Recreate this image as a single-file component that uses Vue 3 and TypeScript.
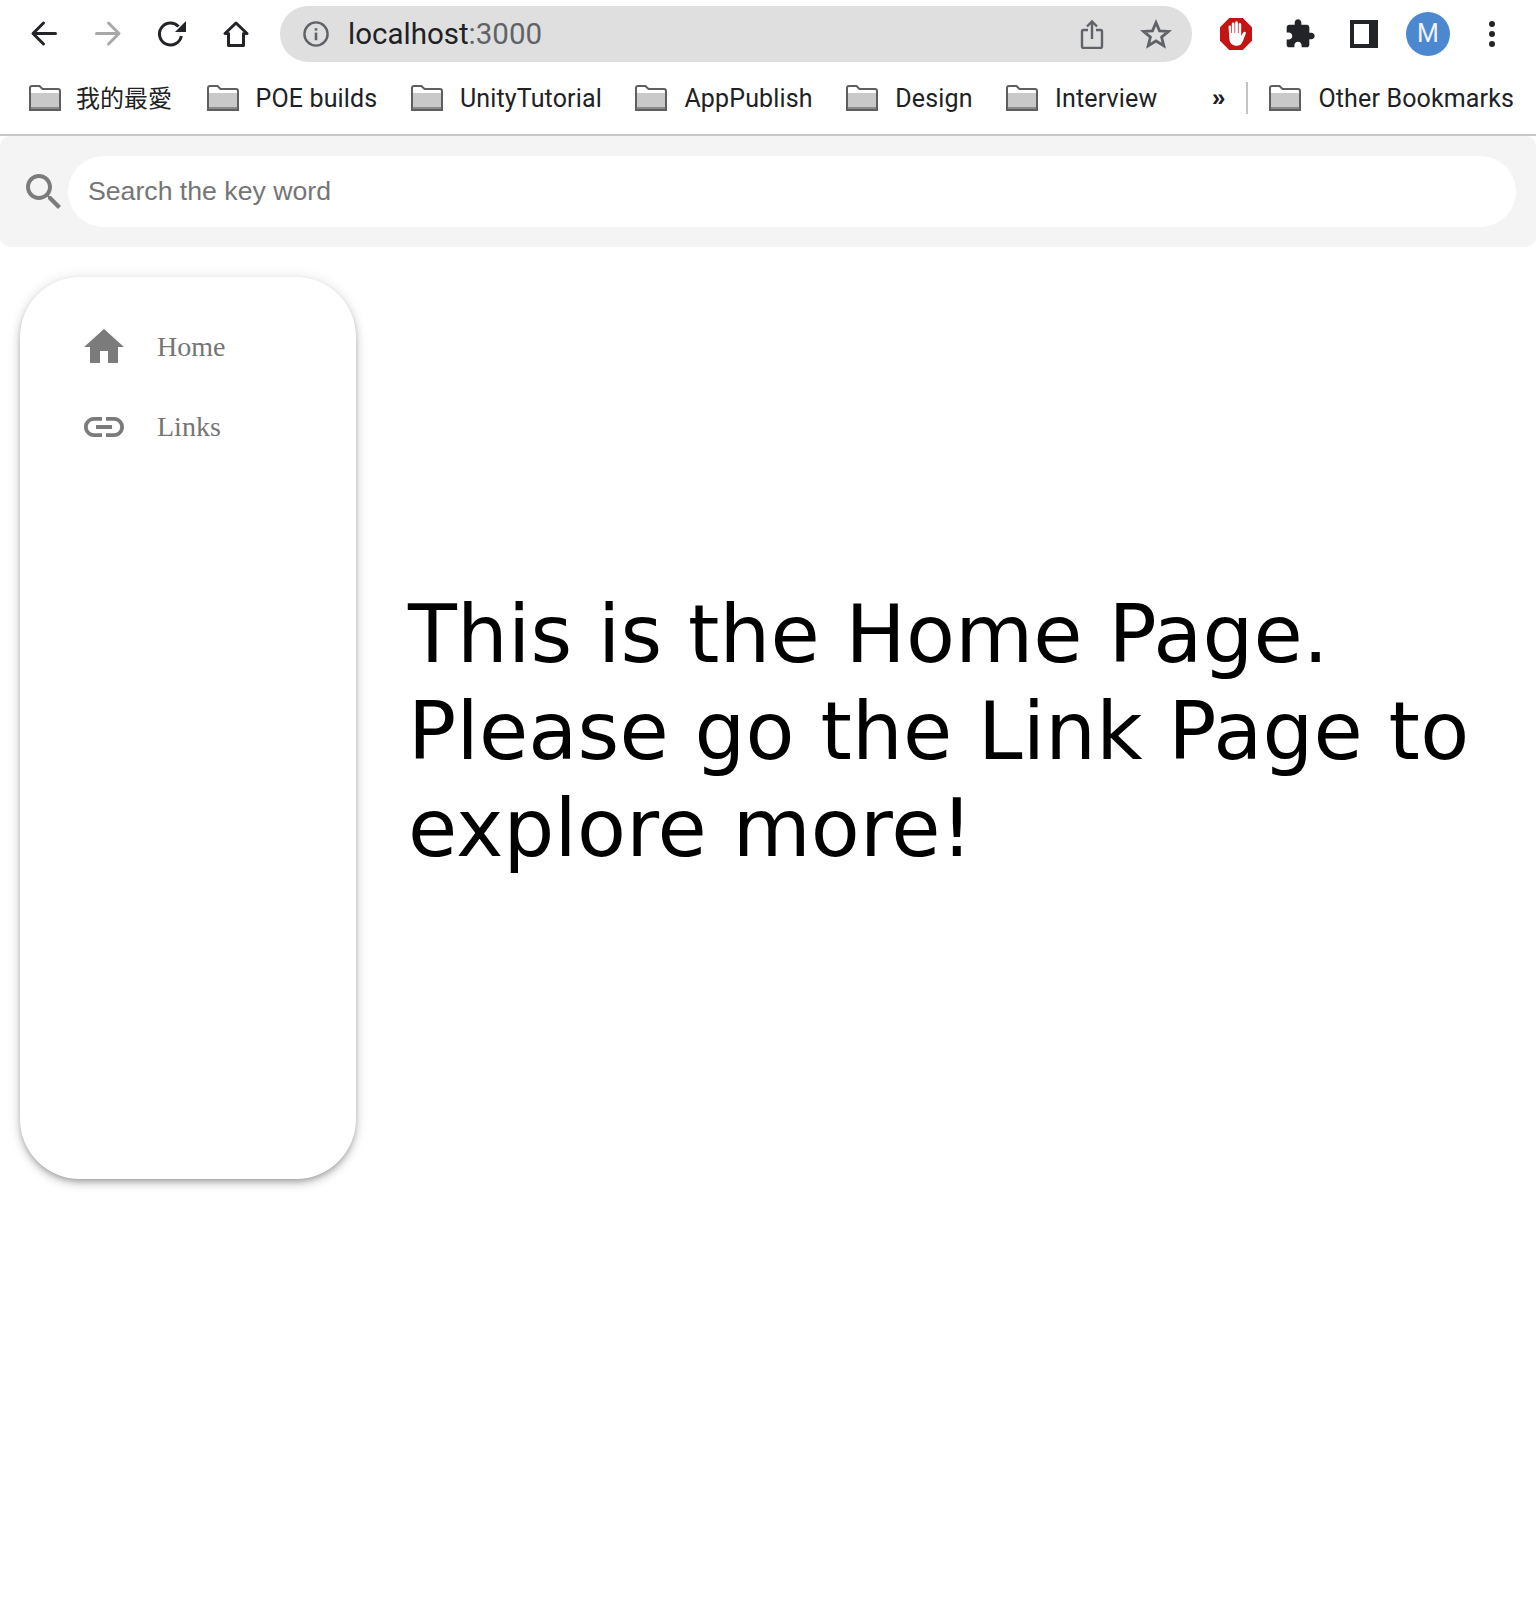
<script setup lang="ts">
const bookmarks: string[] = ['我的最愛', 'POE builds', 'UnityTutorial', 'AppPublish', 'Design', 'Interview']
const nav = [
  { label: 'Home', d: 'M10 20v-6h4v6h5v-8h3L12 3 2 12h3v8z' },
  {
    label: 'Links',
    d: 'M3.9 12c0-1.71 1.39-3.1 3.1-3.1h4V7H7c-2.76 0-5 2.24-5 5s2.24 5 5 5h4v-1.9H7c-1.71 0-3.1-1.39-3.1-3.1zM8 13h8v-2H8v2zm9-6h-4v1.9h4c1.71 0 3.1 1.39 3.1 3.1s-1.39 3.1-3.1 3.1h-4V17h4c2.76 0 5-2.24 5-5s-2.24-5-5-5z',
  },
]
</script>

<template>
  <div class="page">
    <header class="chrome">
      <div class="toolbar">
        <div class="tool">
          <svg width="36" height="36" viewBox="0 0 36 36"><path fill="none" stroke="#232428" stroke-width="3" stroke-linecap="round" stroke-linejoin="round" d="M29.500 17.500H7.500M17.500 7 7 17.500 17.500 28" /></svg>
        </div>
        <div class="tool">
          <svg width="36" height="36" viewBox="0 0 36 36"><path fill="none" stroke="#a8a8a8" stroke-width="3" stroke-linecap="round" stroke-linejoin="round" d="M6.500 17.500H28.500M18.500 7 29 17.500 18.500 28" /></svg>
        </div>
        <div class="tool">
          <svg width="36" height="36" viewBox="0 0 36 36">
            <path fill="none" stroke="#232428" stroke-width="3" d="M24.500 10.500A11 11 0 1 0 27.300 20" />
            <path fill="#232428" d="M32 5V16H21z" />
          </svg>
        </div>
        <div class="tool">
          <svg width="36" height="36" viewBox="0 0 36 36"><path fill="none" stroke="#232428" stroke-width="3" stroke-linejoin="round" d="M18 7 7 17.500H10.500V29.500H25.500V17.500H29z" /></svg>
        </div>
        <div class="omnibox">
          <svg class="info" width="28" height="28" viewBox="0 0 28 28">
            <circle cx="14" cy="14" r="11.6" fill="none" stroke="#5f6368" stroke-width="2.4" />
            <rect x="12.7" y="12.6" width="2.6" height="7.6" fill="#5f6368" />
            <rect x="12.7" y="8.200" width="2.6" height="2.4" fill="#5f6368" />
          </svg>
          <span class="url"><span class="host">localhost</span>:3000</span>
          <span class="spacer"></span>
          <svg class="share" width="24" height="30" viewBox="0 0 24 30">
            <path fill="none" stroke="#5f6368" stroke-width="2.4" stroke-linejoin="round" d="M8 11H3.500A1.500 1.500 0 0 0 2 12.500V27.500A1.500 1.500 0 0 0 3.500 29h17a1.500 1.500 0 0 0 1.500-1.500V12.500A1.500 1.500 0 0 0 20.500 11H16" />
            <path fill="none" stroke="#5f6368" stroke-width="2.4" d="M12 20V3M7 7.500 12 2.500 17 7.500" />
          </svg>
          <svg class="star" width="32" height="32" viewBox="0 0 32 32">
            <path fill="none" stroke="#5f6368" stroke-width="2.8" stroke-linejoin="miter" d="M16 4.500 19.500 12.800 28.500 13.400 21.600 19.100 23.800 27.700 16 23 8.200 27.700 10.400 19.100 3.500 13.400 12.500 12.800z" />
          </svg>
        </div>
        <div class="tool">
          <svg width="34" height="34" viewBox="0 0 34 34">
            <path fill="#c41515" d="M10.200 1h13.600L33 10.200v13.600L23.800 33H10.200L1 23.800V10.200z" />
            <path fill="#fff" d="M9.500 9.800a1.300 1.300 0 0 1 2.600 0V16h.7V6.800a1.350 1.350 0 0 1 2.700 0V16h.7V5.600a1.350 1.350 0 0 1 2.700 0V16h.7V7.300a1.300 1.300 0 0 1 2.600 0V19.200l1.700-3.100c.6-1.100 1.500-1.700 2.400-1.200.7.4.7 1.200.3 2.100l-2.900 7.400c-1 2.600-3.100 4.300-6 4.300-4 0-7.300-2.600-7.300-7z" />
          </svg>
        </div>
        <div class="tool">
          <svg width="32" height="32" viewBox="0 0 24 24"><path fill="#232428" d="M20.500 11H19V7c0-1.100-.9-2-2-2h-4V3.500C13 2.120 11.880 1 10.500 1S8 2.120 8 3.500V5H4c-1.100 0-1.990.9-1.990 2v3.800H3.500c1.490 0 2.700 1.210 2.700 2.700s-1.210 2.700-2.700 2.700H2V20c0 1.100.9 2 2 2h3.800v-1.500c0-1.490 1.210-2.700 2.700-2.700 1.490 0 2.700 1.210 2.700 2.700V22H17c1.100 0 2-.9 2-2v-4h1.500c1.380 0 2.500-1.120 2.500-2.500S21.880 11 20.500 11z" /></svg>
        </div>
        <div class="tool">
          <div class="panel"><div class="panel-inner"></div></div>
        </div>
        <div class="tool">
          <div class="avatar">M</div>
        </div>
        <div class="tool">
          <svg width="8" height="28" viewBox="0 0 8 28">
            <circle cx="4" cy="4" r="3" fill="#232428" />
            <circle cx="4" cy="14" r="3" fill="#232428" />
            <circle cx="4" cy="24" r="3" fill="#232428" />
          </svg>
        </div>
      </div>
      <div class="bookmarks">
        <div v-for="b in bookmarks" :key="b" class="bookmark">
          <svg class="folder" width="32" height="26" viewBox="0 0 32 26">
            <path fill="#fff" stroke="#5f5f5f" stroke-width="2" d="M1 24V3a2 2 0 0 1 2-2h7.500l3 3H29a2 2 0 0 1 2 2v19H1z" />
            <rect x="2" y="8" width="28" height="14" fill="#c9c9c9" />
            <rect x="2" y="22" width="28" height="2" fill="#8a8a8a" />
          </svg>
          <span :class="{ cjk: b === '我的最愛' }">{{ b }}</span>
        </div>
        <span class="more">»</span>
        <span class="divider"></span>
        <div class="bookmark">
          <svg class="folder" width="32" height="26" viewBox="0 0 32 26">
            <path fill="#fff" stroke="#5f5f5f" stroke-width="2" d="M1 24V3a2 2 0 0 1 2-2h7.500l3 3H29a2 2 0 0 1 2 2v19H1z" />
            <rect x="2" y="8" width="28" height="14" fill="#c9c9c9" />
            <rect x="2" y="22" width="28" height="2" fill="#8a8a8a" />
          </svg>
          <span>Other Bookmarks</span>
        </div>
      </div>
    </header>

    <div class="searchbar">
      <svg class="search-icon" width="48" height="48" viewBox="0 0 24 24"><path fill="#7b7b7b" d="M15.500 14h-.79l-.28-.27C15.410 12.590 16 11.110 16 9.500 16 5.910 13.090 3 9.500 3S3 5.910 3 9.500 5.910 16 9.500 16c1.610 0 3.090-.59 4.230-1.570l.27.28v.79l5 4.990L20.490 19l-4.990-5zm-6 0C7.010 14 5 11.990 5 9.500S7.010 5 9.500 5 14 7.010 14 9.500 11.990 14 9.500 14z" /></svg>
      <input class="search-input" type="text" placeholder="Search the key word" />
    </div>

    <main class="content">
      <nav class="sidebar">
        <div v-for="n in nav" :key="n.label" class="nav-item">
          <svg width="48" height="48" viewBox="0 0 24 24"><path fill="#7b7b7b" :d="n.d" /></svg>
          <span>{{ n.label }}</span>
        </div>
      </nav>
      <p class="message">This is the Home Page. Please go the Link Page to explore more!</p>
    </main>
  </div>
</template>

<style>
html, body { margin: 0; background: #fff; }
</style>

<style scoped>
.page {
  width: 1536px;
  height: 1614px;
  background: #fff;
  overflow: hidden;
}
.chrome {
  height: 134px;
  border-bottom: 2px solid #c8c8c8;
}
.toolbar {
  display: flex;
  align-items: center;
  height: 56px;
  padding: 6px 12px 0;
}
.tool {
  flex: none;
  width: 64px;
  height: 56px;
  display: flex;
  align-items: center;
  justify-content: center;
}
.omnibox {
  flex: 1;
  height: 56px;
  margin: 0 12px;
  border-radius: 28px;
  background: #dfdfdf;
  display: flex;
  align-items: center;
  padding: 0 20px 0 22px;
}
.info { flex: none; }
.url {
  margin-left: 18px;
  font: 29.5px/56px Roboto, sans-serif;
  color: #5f6368;
}
.host { color: #202124; }
.spacer { flex: 1; }
.share { flex: none; margin-right: 36px; }
.star { flex: none; }
.panel {
  width: 28px;
  height: 28px;
  background: #232428;
  padding: 4px 9px 4px 4px;
  box-sizing: border-box;
}
.panel-inner {
  width: 100%;
  height: 100%;
  background: #fff;
}
.avatar {
  width: 44px;
  height: 44px;
  border-radius: 50%;
  background: #4c88d0;
  color: #eef4fb;
  font: 25px/44px Roboto, sans-serif;
  text-align: center;
}
.bookmarks {
  display: flex;
  align-items: center;
  height: 72px;
  padding-left: 29px;
  gap: 33.5px;
  font: 25px Roboto, sans-serif;
  letter-spacing: 0.15px;
  color: #202124;
}
.bookmark {
  display: flex;
  align-items: center;
  gap: 17px;
  white-space: nowrap;
}
.cjk {
  font: 24px "Noto Sans CJK TC", sans-serif;
  letter-spacing: 0;
  margin: 0 1px 3px -2px;
}
.folder { flex: none; }
.more {
  margin-left: 21px;
  font: 700 24px "Liberation Sans", sans-serif;
}
.divider {
  width: 2px;
  height: 32px;
  background: #c4c4c4;
  margin-left: -13px;
  margin-right: -12px;
}
.searchbar {
  display: flex;
  align-items: center;
  height: 111px;
  padding: 0 20px;
  box-sizing: border-box;
  border-radius: 10px;
  background: #f4f4f4;
}
.search-icon { flex: none; }
.search-input {
  flex: 1;
  min-width: 0;
  height: 71px;
  padding: 0 20px;
  box-sizing: border-box;
  border: none;
  outline: none;
  border-radius: 36px;
  background: #fff;
  font: 26.67px "Liberation Sans", sans-serif;
}
.search-input::placeholder {
  color: #757575;
  opacity: 1;
}
.content {
  display: flex;
  align-items: center;
  padding: 30px 20px 0;
}
.sidebar {
  flex: none;
  box-sizing: border-box;
  width: 336px;
  height: 902px;
  padding: 30px 0 0 60px;
  border-radius: 60px;
  background: #fff;
  box-shadow: 0 3px 5px -1px rgba(0, 0, 0, 0.2), 0 5px 8px 0 rgba(0, 0, 0, 0.14), 0 1px 14px 0 rgba(0, 0, 0, 0.12);
}
.nav-item {
  display: flex;
  align-items: center;
  gap: 29px;
  height: 80px;
  font: 28px "Liberation Serif", serif;
  color: #757575;
}
.message {
  margin: 6px 0 0 52px;
  font: 80px/97px "DejaVu Sans", sans-serif;
  letter-spacing: 0.22px;
  color: #000;
}
</style>
